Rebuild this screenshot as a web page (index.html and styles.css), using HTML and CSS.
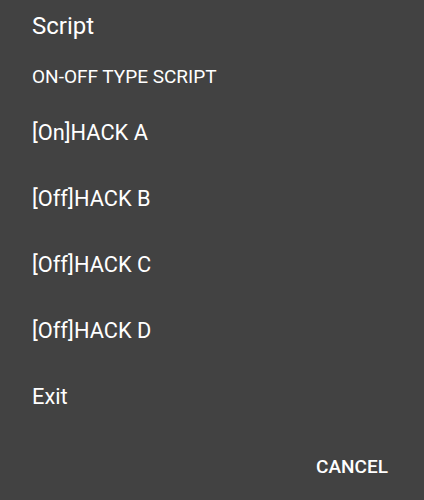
FILE: index.html
```html
<!DOCTYPE html>
<html>
<head>
<meta charset="utf-8">
<link rel="stylesheet" href="styles.css">
</head>
<body>
<div class="dialog">
  <div class="title">Script</div>
  <div class="subtitle">ON-OFF TYPE SCRIPT</div>
  <div class="list">
    <div class="item">[On]HACK A</div>
    <div class="item">[Off]HACK B</div>
    <div class="item">[Off]HACK C</div>
    <div class="item">[Off]HACK D</div>
    <div class="item">Exit</div>
  </div>
  <div class="actions">
    <div class="btn">CANCEL</div>
  </div>
</div>
</body>
</html>
```
FILE: styles.css
```css
html, body {
  margin: 0;
  padding: 0;
  background: #424242;
}
.dialog {
  width: 424px;
  height: 500px;
  box-sizing: border-box;
  background: #424242;
  color: #ffffff;
  font-family: Roboto, "Noto Sans", sans-serif;
  padding-top: 10px;
  display: flex;
  flex-direction: column;
}
.title {
  padding-left: 32px;
  font-size: 24px;
  line-height: 32px;
  height: 32px;
}
.subtitle {
  padding-left: 32px;
  margin-top: 23px;
  font-size: 19px;
  line-height: 24px;
  height: 24px;
}
.list {
  margin-top: 11px;
  display: flex;
  flex-direction: column;
}
.item {
  padding-left: 32px;
  height: 66px;
  line-height: 66px;
  font-size: 21.8px;
}
.actions {
  margin-top: 19px;
  display: flex;
  justify-content: flex-end;
  padding-right: 36px;
}
.btn {
  font-size: 19px;
  font-weight: 500;
  line-height: 36px;
  height: 36px;
}
```
